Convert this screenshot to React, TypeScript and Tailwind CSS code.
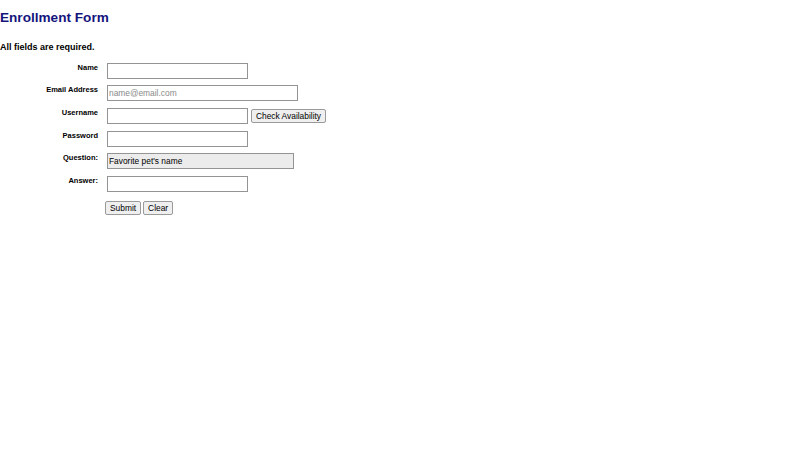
import React from "react";

const rows: { label: string; kind: string }[] = [
  { label: "Name", kind: "name" },
  { label: "Email Address", kind: "email" },
  { label: "Username", kind: "user" },
  { label: "Password", kind: "pass" },
  { label: "Question:", kind: "question" },
  { label: "Answer:", kind: "answer" },
];

const inputBase =
  "h-[16px] border border-[#949494] px-[1px] py-0 text-[8.4px] leading-[10px] text-black outline-none placeholder:text-[#8a8a8a]";

const btnCls =
  "h-[14px] rounded-[2px] border border-[#9a9a9a] bg-[#efefef] px-[4px] py-0 text-[8.4px] leading-[10px] text-black";

export default function App() {
  return (
    <div className="min-h-[450px] w-[800px] bg-white font-['Liberation_Sans',Arial,sans-serif] text-black">
      <h1 className="pt-[10px] text-[13.6px] font-bold leading-[16px] text-[#14147c]">
        Enrollment Form
      </h1>
      <p className="mt-[16px] text-[9px] font-bold leading-[10px]">All fields are required.</p>
      <form className="mt-[10.8px] flex flex-col" onSubmit={(e) => e.preventDefault()}>
        {rows.map((r) => (
          <div key={r.kind} className="flex h-[22.6px] items-start">
            <label className="w-[98px] shrink-0 text-right text-[7.5px] font-bold leading-[9px]">
              {r.label}
            </label>
            <div className="ml-[9px] flex items-start gap-[3px]">
              {r.kind === "email" ? (
                <input className={inputBase + " w-[191px] bg-white"} placeholder="name@email.com" />
              ) : r.kind === "question" ? (
                <input
                  className={inputBase + " w-[187px] bg-[#ececec]"}
                  defaultValue="Favorite pet's name"
                  readOnly
                />
              ) : r.kind === "pass" ? (
                <input type="password" className={inputBase + " w-[141px] bg-white"} />
              ) : (
                <input className={inputBase + " w-[141px] bg-white"} />
              )}
              {r.kind === "user" && (
                <button type="button" className={btnCls + " mt-[1px]"}>
                  Check Availability
                </button>
              )}
            </div>
          </div>
        ))}
        <div className="ml-[105px] mt-[2.5px] flex gap-[2px]">
          <button type="submit" className={btnCls}>
            Submit
          </button>
          <button type="reset" className={btnCls}>
            Clear
          </button>
        </div>
      </form>
    </div>
  );
}
